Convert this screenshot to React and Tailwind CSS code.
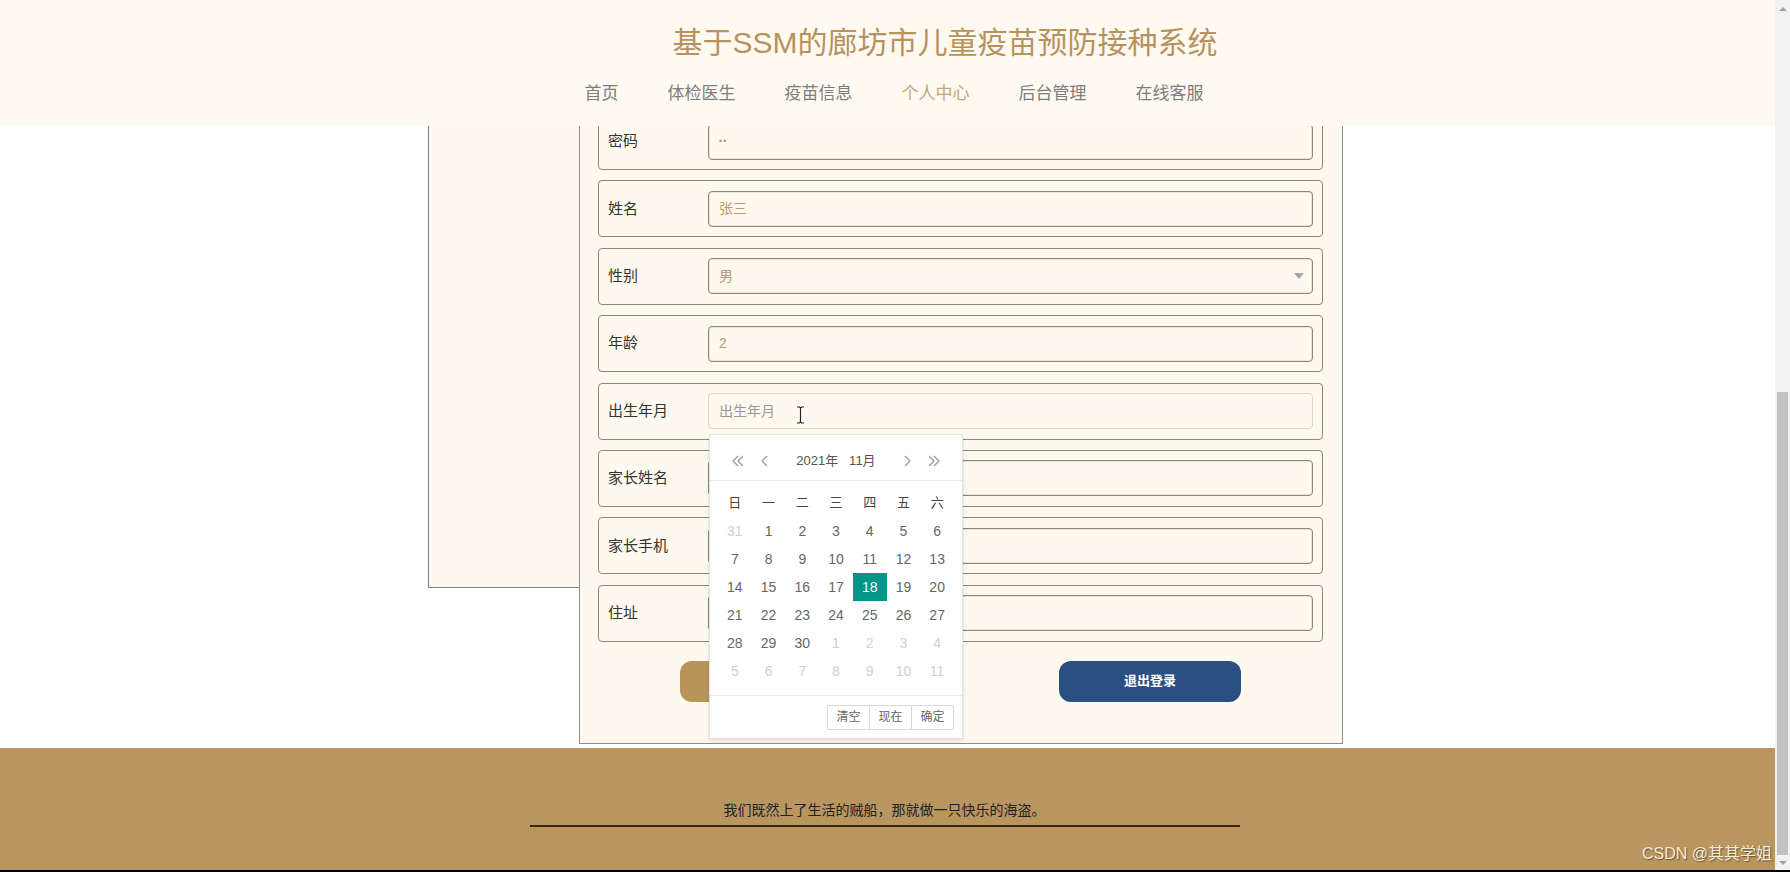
import React from "react";

const NAV = ["首页", "体检医生", "疫苗信息", "个人中心", "后台管理", "在线客服"];

const ROWS = [
  { label: "密码", value: "••", kind: "password" },
  { label: "姓名", value: "张三" },
  { label: "性别", value: "男", kind: "select" },
  { label: "年龄", value: "2" },
  { label: "出生年月", placeholder: "出生年月", kind: "date" },
  { label: "家长姓名", value: "" },
  { label: "家长手机", value: "" },
  { label: "住址", value: "" },
];

const WEEK = ["日", "一", "二", "三", "四", "五", "六"];

// [day, inMonth]
const DAYS = [
  [[31, false], [1, true], [2, true], [3, true], [4, true], [5, true], [6, true]],
  [[7, true], [8, true], [9, true], [10, true], [11, true], [12, true], [13, true]],
  [[14, true], [15, true], [16, true], [17, true], [18, true], [19, true], [20, true]],
  [[21, true], [22, true], [23, true], [24, true], [25, true], [26, true], [27, true]],
  [[28, true], [29, true], [30, true], [1, false], [2, false], [3, false], [4, false]],
  [[5, false], [6, false], [7, false], [8, false], [9, false], [10, false], [11, false]],
];

// ── Calendar pieces ───────────────────────────────────────────────────────────

function Chevron({ dir = "left", double = false }) {
  const single = dir === "left" ? "M9 2 L4 7 L9 12" : "M5 2 L10 7 L5 12";
  const second = dir === "left" ? "M14 2 L9 7 L14 12" : "M0 2 L5 7 L0 12";
  return (
    <svg width="14" height="14" viewBox="0 0 14 14" className="shrink-0">
      <path d={single} fill="none" stroke="#9a9a9a" strokeWidth="1.3" />
      {double && <path d={second} fill="none" stroke="#9a9a9a" strokeWidth="1.3" />}
    </svg>
  );
}

function DatePicker() {
  return (
    <div className="absolute left-0 top-full mt-[6px] z-20 w-[254px] bg-white border border-[#e2e2e2] rounded-[2px] shadow-[0_2px_4px_rgba(0,0,0,0.12)]">
      {/* month header */}
      <div className="h-[46px] pt-[6px] border-b border-[#ececec] flex items-center px-[19px]">
        <Chevron dir="left" double />
        <span className="ml-[15px]"><Chevron dir="left" /></span>
        <span className="flex-1 text-center text-[13px] text-[#555]">2021年&nbsp;&nbsp;&nbsp;11月</span>
        <span className="mr-[15px]"><Chevron dir="right" /></span>
        <Chevron dir="right" double />
      </div>

      {/* day table */}
      <div className="px-[8px] pt-[8px]">
        <div className="grid grid-cols-7">
          {WEEK.map((w) => (
            <div key={w} className="h-[28px] flex items-center justify-center text-[13px] text-[#444]">
              {w}
            </div>
          ))}
          {DAYS.flat().map(([d, inMonth], i) => {
            const selected = inMonth && d === 18;
            return (
              <div
                key={i}
                className={`h-[28px] flex items-center justify-center text-[14px] ${
                  selected ? "bg-[#009688] text-white" : inMonth ? "text-[#666]" : "text-[#d0d0d0]"
                }`}
              >
                {d}
              </div>
            );
          })}
        </div>
      </div>

      {/* footer buttons */}
      <div className="mt-[10px] h-[43px] border-t border-[#ececec] flex items-center justify-end pr-[8px]">
        {["清空", "现在", "确定"].map((b, i) => (
          <span
            key={b}
            className={`h-[25px] w-[43px] flex items-center justify-center border border-[#d8d8d8] text-[12px] text-[#666] bg-white ${
              i > 0 ? "-ml-px" : ""
            } ${i === 0 ? "rounded-l-[2px]" : ""} ${i === 2 ? "rounded-r-[2px]" : ""}`}
          >
            {b}
          </span>
        ))}
      </div>
    </div>
  );
}

// ── Form row ──────────────────────────────────────────────────────────────────

function FormRow({ label, value, placeholder, kind }) {
  const focused = kind === "date";
  return (
    <div className="h-[57px] border border-[#8d877c] rounded-[4px] flex items-center">
      <span className="w-[109px] pl-[9px] text-[15px] text-[#333] shrink-0">{label}</span>
      <div
        className={`relative flex-1 mr-[9px] h-[36px] rounded-[4px] border bg-[#fef9ee] flex items-center pl-[10px] ${
          focused ? "border-[#ddd6c6]" : "border-[#8d877c] shadow-[inset_0_0_0_1px_#e9e3d6]"
        }`}
      >
        {kind === "password" ? (
          <span className="text-[9px] text-[#b89a6e] tracking-[1px]">{value}</span>
        ) : value ? (
          <span className="text-[14px] text-[#b89a6e]">{value}</span>
        ) : placeholder ? (
          <span className="text-[14px] text-[#999]">{placeholder}</span>
        ) : null}

        {kind === "select" && (
          <span className="absolute right-[8px] top-1/2 -translate-y-1/2 w-0 h-0 border-l-[5px] border-r-[5px] border-t-[6px] border-l-transparent border-r-transparent border-t-[#a5a5a5]" />
        )}

        {kind === "date" && (
          <>
            {/* text cursor hovering over the field */}
            <svg width="9" height="18" viewBox="0 0 9 18" className="absolute left-[87px] top-[12px]">
              <path d="M1 1 H3.5 L4.5 2 L5.5 1 H8 M4.5 2 V16 M1 17 H3.5 L4.5 16 L5.5 17 H8" fill="none" stroke="#fff" strokeWidth="2.6" />
              <path d="M1 1 H3.5 L4.5 2 L5.5 1 H8 M4.5 2 V16 M1 17 H3.5 L4.5 16 L5.5 17 H8" fill="none" stroke="#222" strokeWidth="1.2" />
            </svg>
            <DatePicker />
          </>
        )}
      </div>
    </div>
  );
}

// ── Page ──────────────────────────────────────────────────────────────────────

export default function App() {
  return (
    <div className="h-[872px] w-full overflow-hidden flex bg-white border-b-2 border-black font-['Liberation_Sans','Noto_Sans_CJK_SC',sans-serif]">
      <div className="flex-1 flex flex-col min-w-0">
        {/* Header */}
        <header className="relative z-10 h-[126px] shrink-0 bg-[#fefaf2]">
          <div className="pt-[28px] pl-[115px] flex justify-center text-[30px] leading-[30px] text-[#b8925c]">
            基于SSM的廊坊市儿童疫苗预防接种系统
          </div>
          <nav className="mt-[27px] pl-[13px] flex justify-center gap-[49px] text-[17px] leading-[17px]">
            {NAV.map((n) => (
              <span key={n} className={n === "个人中心" ? "text-[#c3a679]" : "text-[#7d7d7d]"}>
                {n}
              </span>
            ))}
          </nav>
        </header>

        {/* Content */}
        <main className="-mt-[14px] w-[915px] ml-[428px] flex items-start shrink-0">
          <aside className="w-[151px] h-[476px] border-l border-b border-[#7f7f7f] bg-[#fef9ee] shrink-0" />
          <section className="w-[764px] border border-[#8e8e8e] bg-[#fef9ee] pl-[18px] pr-[19px] pb-[41px]">
            <div className="flex flex-col gap-[10.4px]">
              {ROWS.map((r) => (
                <FormRow key={r.label} {...r} />
              ))}
            </div>
            <div className="mt-[19px] flex justify-center gap-[197px]">
              {/* its label sits under the open date picker */}
              <button className="w-[182px] h-[41px] rounded-[12px] bg-[#b9945a]" />
              <button className="w-[182px] h-[41px] rounded-[12px] bg-[#2b4f82] text-white text-[13px] font-semibold">
                退出登录
              </button>
            </div>
          </section>
        </main>

        {/* Footer */}
        <footer className="relative mt-[4px] flex-1 bg-[#b9955f] flex flex-col items-center pr-[6px]">
          <p className="mt-[55px] text-[14px] leading-[14px] text-[#222]">
            我们既然上了生活的贼船，那就做一只快乐的海盗。
          </p>
          <div className="mt-[8px] w-[710px] h-[2px] bg-[#3b2a12]" />
          <span className="absolute right-[3px] bottom-[8px] text-[16px] leading-[16px] text-[#f2ecde] [text-shadow:1px_1px_1px_rgba(60,40,10,0.6)]">
            CSDN @其其学姐
          </span>
        </footer>
      </div>

      {/* Scrollbar */}
      <div className="w-[15px] shrink-0 bg-[#f1f1f1] flex flex-col">
        <div className="h-[17px] flex items-center justify-center">
          <span className="w-0 h-0 border-l-[4px] border-r-[4px] border-b-[4px] border-l-transparent border-r-transparent border-b-[#a3a3a3]" />
        </div>
        <div className="h-[375px]" />
        <div className="flex-1 mx-[2px] bg-[#c1c1c1]" />
        <div className="h-[15px] flex items-center justify-center">
          <span className="w-0 h-0 border-l-[4px] border-r-[4px] border-t-[4px] border-l-transparent border-r-transparent border-t-[#a3a3a3]" />
        </div>
      </div>
    </div>
  );
}
